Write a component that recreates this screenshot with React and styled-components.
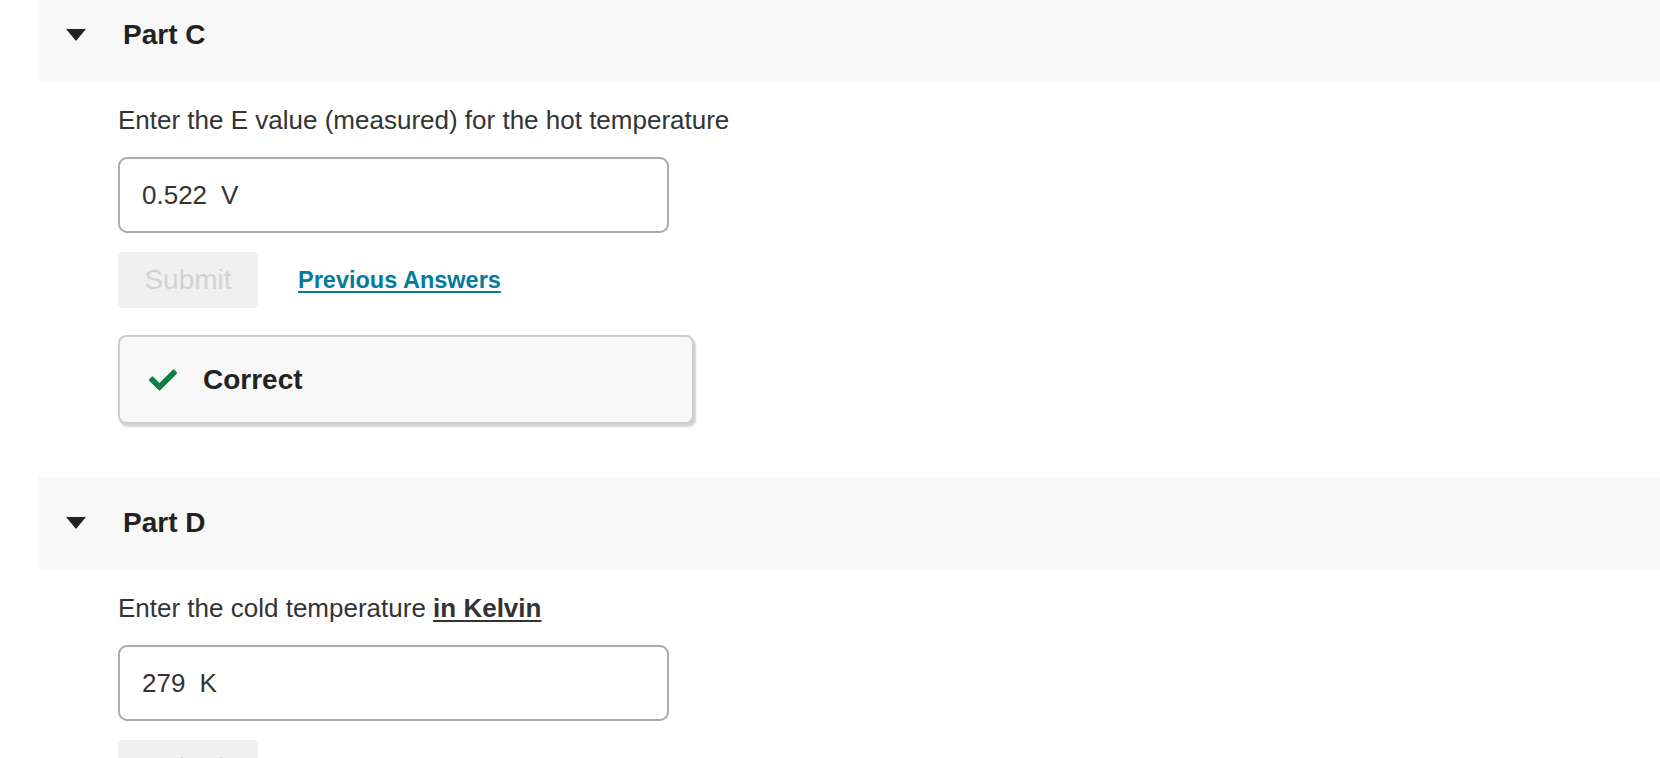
import React from "react";
import styled, { createGlobalStyle } from "styled-components";
import { FaCheck } from "react-icons/fa";

const GlobalStyle = createGlobalStyle`
  html, body {
    margin: 0;
    padding: 0;
    background: #ffffff;
    overflow: hidden;
  }
  body {
    font-family: "Liberation Sans", Arial, Helvetica, sans-serif;
    color: #333333;
  }
`;

const parts = [
  {
    label: "Part C",
    prompt: "Enter the E value (measured) for the hot temperature",
    value: "0.522",
    unit: "V",
    correct: true,
  },
  {
    label: "Part D",
    prompt: "Enter the cold temperature ",
    emphasis: "in Kelvin",
    value: "279",
    unit: "K",
    correct: false,
  },
];

const App = () => {
  return (
    <Page>
      <GlobalStyle />
      {parts.map((part) => (
        <Section key={part.label}>
          <PartHeader>
            <Caret />
            <PartTitle>{part.label}</PartTitle>
          </PartHeader>
          <Body>
            <Prompt>
              {part.prompt}
              {part.emphasis && <Emph>{part.emphasis}</Emph>}
            </Prompt>
            <AnswerBox>
              <span>{part.value}</span>
              <Unit>{part.unit}</Unit>
            </AnswerBox>
            <Actions>
              <SubmitButton disabled>Submit</SubmitButton>
              <PrevLink href="#">Previous Answers</PrevLink>
            </Actions>
            {part.correct && (
              <Feedback>
                <CheckIcon />
                <FeedbackText>Correct</FeedbackText>
              </Feedback>
            )}
          </Body>
        </Section>
      ))}
    </Page>
  );
};

const Page = styled.div`
  margin-top: -11px;
  padding-left: 38px;
`;

const Section = styled.section`
  display: flex;
  flex-direction: column;
  margin-bottom: 53px;
`;

const PartHeader = styled.div`
  display: flex;
  align-items: center;
  height: 92px;
  padding-left: 28px;
  background: #f8f8f8;
`;

const Caret = styled.span`
  width: 0;
  height: 0;
  border-left: 10px solid transparent;
  border-right: 10px solid transparent;
  border-top: 12px solid #222222;
  margin-right: 37px;
`;

const PartTitle = styled.h2`
  margin: 0;
  font-size: 28px;
  font-weight: 700;
  color: #222222;
`;

const Body = styled.div`
  display: flex;
  flex-direction: column;
  align-items: flex-start;
  padding-left: 80px;
`;

const Prompt = styled.p`
  margin: 24px 0 22px;
  font-size: 26px;
  line-height: 30px;
  color: #333333;
`;

const Emph = styled.span`
  font-weight: 700;
  text-decoration: underline;
  text-underline-offset: 3px;
`;

const AnswerBox = styled.div`
  box-sizing: border-box;
  display: flex;
  align-items: center;
  width: 551px;
  height: 76px;
  padding-left: 22px;
  border: 2px solid #aaaaaa;
  border-radius: 9px;
  font-size: 26px;
  color: #333333;
`;

const Unit = styled.span`
  margin-left: 14px;
`;

const Actions = styled.div`
  display: flex;
  align-items: center;
  gap: 40px;
  margin-top: 19px;
`;

const SubmitButton = styled.button`
  width: 140px;
  height: 56px;
  border: none;
  border-radius: 4px;
  background: #f0f0f0;
  color: #d2d2d2;
  font-family: inherit;
  font-size: 28px;
  padding: 0;
`;

const PrevLink = styled.a`
  font-size: 23.5px;
  font-weight: 700;
  color: #037b9c;
  text-decoration: underline;
  text-underline-offset: 3px;
`;

const Feedback = styled.div`
  box-sizing: border-box;
  display: flex;
  align-items: center;
  width: 576px;
  height: 89px;
  margin-top: 27px;
  padding-left: 29px;
  border: 2px solid #cccccc;
  border-radius: 8px;
  background: #f8f8f8;
  box-shadow: 2px 3px 2px rgba(0, 0, 0, 0.18);
`;

const CheckIcon = styled(FaCheck)`
  width: 28px;
  height: 28px;
  color: #0b8041;
  margin-right: 26px;
`;

const FeedbackText = styled.span`
  font-size: 28px;
  font-weight: 700;
  color: #222222;
`;

export default App;
